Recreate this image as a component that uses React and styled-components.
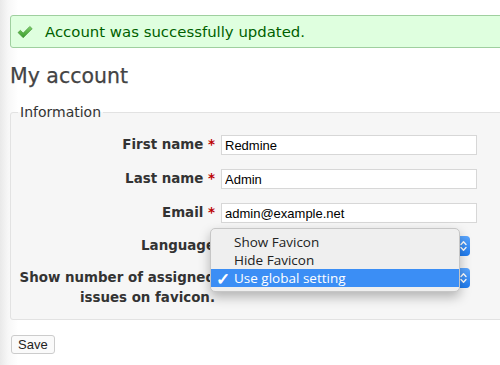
import React from "react";
import styled, { createGlobalStyle } from "styled-components";

const GlobalStyle = createGlobalStyle`
  html, body {
    margin: 0;
    padding: 0;
  }
  body {
    background: linear-gradient(to right, #e9e9e9 0px, #f7f7f7 8px, #ffffff 18px);
    font-family: "DejaVu Sans", Verdana, sans-serif;
    color: #333;
    overflow: hidden;
  }
`;

const fields = [
  { label: "First name", value: "Redmine", required: true, gap: 14 },
  { label: "Last name", value: "Admin", required: true, gap: 14 },
  { label: "Email", value: "admin@example.net", required: true, gap: 13 },
];

const options = [
  { label: "Show Favicon" },
  { label: "Hide Favicon" },
  { label: "Use global setting", selected: true },
];

function CheckIcon() {
  return (
    <svg width="16" height="14" viewBox="0 0 16 14">
      <defs>
        <linearGradient id="chk" x1="0" y1="0" x2="0" y2="1">
          <stop offset="0" stopColor="#7fd06a" />
          <stop offset="1" stopColor="#3a9a2c" />
        </linearGradient>
      </defs>
      <path
        d="M1 7.6 L3.4 5.3 L6.2 8.1 L12.8 1.4 L15.2 3.7 L6.2 12.8 Z"
        fill="url(#chk)"
        stroke="#3f8f34"
        strokeWidth="0.6"
        strokeLinejoin="round"
      />
    </svg>
  );
}

function Arrows() {
  return (
    <svg width="7" height="12" viewBox="0 0 7 12">
      <path
        d="M1 4.5 L3.5 1.8 L6 4.5 M1 7.5 L3.5 10.2 L6 7.5"
        fill="none"
        stroke="#fff"
        strokeWidth="1.4"
        strokeLinecap="round"
        strokeLinejoin="round"
      />
    </svg>
  );
}

export default function App() {
  return (
    <>
      <GlobalStyle />
      <Page>
        <Flash>
          <CheckIcon />
          <span>Account was successfully updated.</span>
        </Flash>
        <Title>My account</Title>
        <Box>
          <Legend>Information</Legend>
          {fields.map((f) => (
            <Row key={f.label} $gap={f.gap}>
              <Label>
                {f.label}
                {f.required && <Required> *</Required>}
              </Label>
              <TextInput defaultValue={f.value} />
            </Row>
          ))}
          <Row $gap={12}>
            <Label>Language</Label>
            <Select>
              <SelectButton>
                <Arrows />
              </SelectButton>
            </Select>
          </Row>
          <Row $gap={0}>
            <Label>
              Show number of assigned
              <br />
              issues on favicon.
            </Label>
            <Select>
              <SelectButton>
                <Arrows />
              </SelectButton>
              <Menu>
                {options.map((o) => (
                  <MenuItem key={o.label} $selected={o.selected}>
                    <Tick>{o.selected ? "✓" : ""}</Tick>
                    {o.label}
                  </MenuItem>
                ))}
              </Menu>
            </Select>
          </Row>
        </Box>
        <SaveButton>Save</SaveButton>
      </Page>
    </>
  );
}

const Page = styled.div`
  padding: 15px 0 0 10px;
  width: 520px;
`;

const Flash = styled.div`
  display: flex;
  align-items: center;
  gap: 12px;
  height: 31px;
  padding-left: 6px;
  background: #dfffdf;
  border: 1px solid #9fcf9f;
  border-radius: 3px;
  color: #005f00;
  font-size: 14.9px;
`;

const Title = styled.h2`
  margin: 15px 0 0;
  font-size: 20.5px;
  line-height: 26px;
  font-weight: normal;
  color: #444;
  -webkit-text-stroke: 0.25px #444;
`;

const Box = styled.fieldset`
  margin: 15px 0 0;
  padding: 15px 0 11px;
  background: #f6f6f6;
  border: 1px solid #e2e2e2;
  border-radius: 3px;
`;

const Legend = styled.legend`
  margin-left: 7px;
  padding: 0 2px;
  font-size: 14px;
  color: #333;
`;

const Row = styled.div`
  display: grid;
  grid-template-columns: 204px 256px;
  column-gap: 6px;
  align-items: start;
  margin-bottom: ${(p) => p.$gap}px;
`;

const Label = styled.div`
  text-align: right;
  white-space: nowrap;
  font-weight: bold;
  font-size: 13.4px;
  line-height: 20px;
  color: #333;
`;

const Required = styled.span`
  color: #bb0000;
`;

const TextInput = styled.input`
  box-sizing: border-box;
  height: 20px;
  width: 256px;
  margin: 0;
  padding: 1px 3px;
  border: 1px solid #d7d7d7;
  background: #fff;
  font-family: "Liberation Sans", Arial, sans-serif;
  font-size: 13px;
  color: #000;
  outline: none;
`;

const Select = styled.div`
  position: relative;
  box-sizing: border-box;
  width: 249px;
  height: 20px;
  border: 1px solid #c8c8c8;
  border-radius: 4px;
  background: #fff;
`;

const SelectButton = styled.div`
  position: absolute;
  right: -1px;
  top: -1px;
  bottom: -1px;
  width: 13px;
  display: flex;
  align-items: center;
  justify-content: center;
  border-radius: 0 4px 4px 0;
  background: linear-gradient(#5aa6ff, #1f7cf0);
`;

const Menu = styled.div`
  position: absolute;
  left: -12px;
  top: -41px;
  width: 250px;
  box-sizing: border-box;
  padding: 4px 0;
  background: #efefef;
  border: 1px solid #c6c6c6;
  border-radius: 5px;
  box-shadow: 0 5px 12px rgba(0, 0, 0, 0.28);
  z-index: 2;
`;

const MenuItem = styled.div`
  display: flex;
  align-items: center;
  height: 18px;
  font-family: "Open Sans", "Liberation Sans", sans-serif;
  font-size: 13.5px;
  color: ${(p) => (p.$selected ? "#fff" : "#222")};
  background: ${(p) => (p.$selected ? "#3b8ef5" : "transparent")};
`;

const Tick = styled.span`
  width: 23px;
  text-align: center;
  font-size: 17px;
  font-weight: bold;
`;

const SaveButton = styled.button`
  margin: 15px 0 0 1px;
  height: 19px;
  padding: 0 6px;
  background: #fafafa;
  border: 1px solid #cccccc;
  border-radius: 3px;
  font-family: "Liberation Sans", Arial, sans-serif;
  font-size: 13px;
  color: #222;
`;
